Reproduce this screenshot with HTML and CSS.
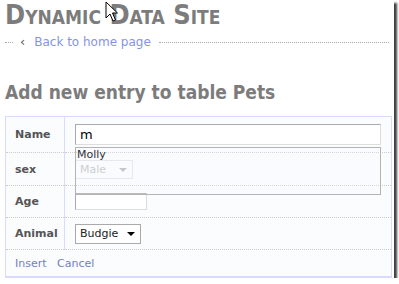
FILE: index.html
```html
<!DOCTYPE html>
<html lang="en">
<head>
    <meta charset="UTF-8">
    <title>Dynamic Data Site</title>
    <link rel="stylesheet" href="styles.css">
</head>
<body>
    <div class="page">
        <h1 class="site-title">Dynamic Data Site</h1>
        <nav class="breadcrumb">
            <span class="dots short"></span>
            <span class="chevron">&lsaquo;</span>
            <a href="#">Back to home page</a>
            <span class="dots"></span>
        </nav>
        <h2 class="page-title">Add new entry to table Pets</h2>
        <table class="detail">
            <tr>
                <td class="label">Name</td>
                <td class="field name-cell">
                    <input type="text" class="text-input wide" value="m">
                    <div class="suggest">
                        <div class="suggest-item">Molly</div>
                    </div>
                </td>
            </tr>
            <tr>
                <td class="label">sex</td>
                <td class="field sex-cell">
                    <span class="select faded">Male <span class="arrow"></span></span>
                </td>
            </tr>
            <tr>
                <td class="label">Age</td>
                <td class="field"><input type="text" class="text-input short-input"></td>
            </tr>
            <tr>
                <td class="label">Animal</td>
                <td class="field">
                    <span class="select">Budgie <span class="arrow"></span></span>
                </td>
            </tr>
            <tr>
                <td class="footer" colspan="2">
                    <a href="#">Insert</a>
                    <a href="#">Cancel</a>
                </td>
            </tr>
        </table>

        <!-- mouse pointer -->
        <svg class="cursor" width="14" height="22" viewBox="0 0 14 22">
            <path d="M1 1 L1 17 L5 13 L8 20 L10.5 19 L7.5 12 L12.5 12 Z" fill="#fff" stroke="#000" stroke-width="1"/>
        </svg>
    </div>
</body>
</html>
```

FILE: styles.css
```css
body {
    margin: 0;
    padding: 0;
    background-color: #fff;
    font-family: "DejaVu Sans", Verdana, sans-serif;
}
.page {
    position: relative;
    width: 384px;
    height: 278px;
    padding: 0 5px;
    background-color: #fff;
    box-shadow: 3px 3px 2px rgba(0,0,0,0.75);
    overflow: hidden;
}
.site-title {
    margin: 0;
    padding-top: 1px;
    font-family: "DejaVu Sans Condensed", "DejaVu Sans", sans-serif;
    font-size: 27px;
    line-height: 28px;
    font-weight: bold;
    font-variant: small-caps;
    color: #7c7c7c;
}
.breadcrumb {
    display: flex;
    align-items: center;
    height: 26px;
    font-size: 12px;
}
.dots {
    flex: 1;
    border-top: 1px dotted #aaa;
}
.dots.short {
    flex: 0 0 8px;
}
.chevron {
    margin: 0 9px 0 7px;
    color: #555;
    font-size: 13px;
    line-height: 12px;
}
.breadcrumb a {
    color: #8494e4;
    text-decoration: none;
    margin-right: 8px;
}
.page-title {
    margin: 25px 0 12px;
    font-family: "DejaVu Sans Condensed", "DejaVu Sans", sans-serif;
    font-size: 19px;
    line-height: 24px;
    color: #7c7c7c;
}
.detail {
    width: 387px;
    border-collapse: collapse;
    border: 1px solid #dadaff;
    border-bottom: 3px solid #dadaff;
    background-color: #fbfcfe;
}
.detail td {
    border-bottom: 1px dotted #ccc;
    padding: 0;
    vertical-align: middle;
}
.label {
    width: 49px;
    padding-left: 9px !important;
    border-right: 1px solid #dadaff;
    font-size: 11px;
    font-weight: bold;
    color: #555;
}
.field {
    padding-left: 10px !important;
    height: 31px;
}
.name-cell {
    position: relative;
    height: 35px !important;
}
.sex-cell {
    height: 32px;
}
.text-input {
    box-sizing: border-box;
    height: 21px;
    border: 1px solid #aaa;
    border-bottom-color: #ddd;
    border-right-color: #ddd;
    font-family: "DejaVu Sans", sans-serif;
    font-size: 13px;
    padding: 0 4px;
    background: #fff;
    display: block;
}
.text-input.wide {
    width: 306px;
}
.text-input.short-input {
    width: 72px;
    height: 17px;
}
.suggest {
    position: absolute;
    left: 10px;
    top: 30px;
    width: 304px;
    height: 46px;
    border: 1px solid #b4b4b4;
    background: rgba(250, 251, 253, 0.2);
}
.suggest-item {
    padding-left: 1px;
    font-size: 11px;
    line-height: 14px;
    color: #333;
}
.select {
    display: inline-flex;
    align-items: center;
    justify-content: space-between;
    box-sizing: border-box;
    width: 66px;
    height: 20px;
    padding: 0 5px 0 4px;
    border: 1px solid #aaa;
    background: #fff;
    font-size: 11px;
    color: #222;
    vertical-align: middle;
}
.select .arrow {
    width: 0;
    height: 0;
    border-left: 4px solid transparent;
    border-right: 4px solid transparent;
    border-top: 4px solid #000;
}
.select.faded {
    width: 58px;
    height: 19px;
    border-color: #e4e4e4;
    color: #c4c4c4;
    background: transparent;
}
.select.faded .arrow {
    border-top-color: #bbb;
}
.footer {
    height: 26px;
    padding-left: 9px !important;
    font-size: 11px;
    border-bottom: none !important;
}
.footer a {
    color: #7080c4;
    text-decoration: none;
    margin-right: 7px;
}
.cursor {
    position: absolute;
    left: 105px;
    top: 1px;
}
```
